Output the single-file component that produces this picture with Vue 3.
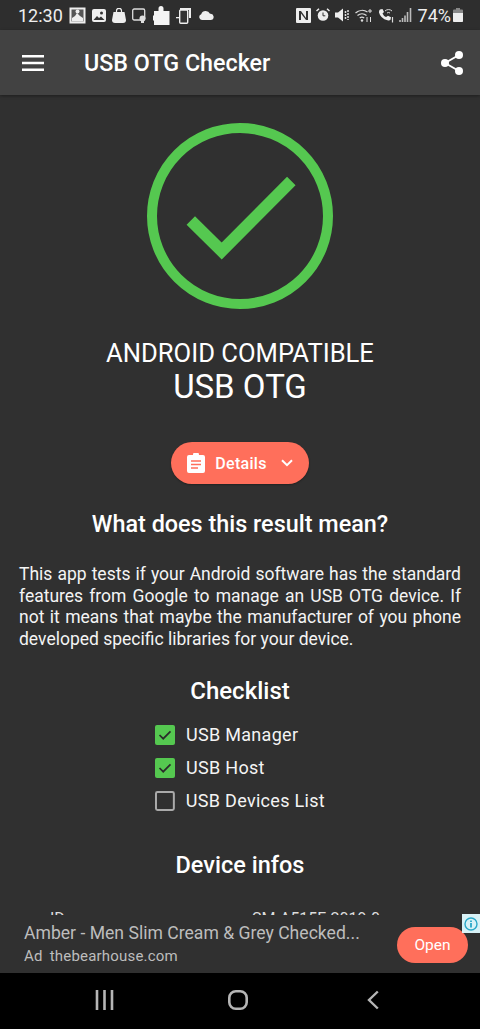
<template>
  <div class="screen">
    <div class="status">
      <span class="time">12:30</span>
      <div class="notif">
        <svg width="17" height="17" viewBox="0 0 17 17"><rect x="0.5" y="0.5" width="16" height="16" fill="#eee"/><rect x="2.5" y="2.5" width="12" height="12" fill="#555"/><path d="M3 14.500V11l3-2 2-3 3 3 3 2v3.500z" fill="#eee"/><circle cx="8.500" cy="4.500" r="2" fill="#eee"/></svg>
        <svg width="14" height="13" viewBox="0 0 14 13"><rect width="14" height="13" rx="2" fill="#eee"/><path d="M1.500 11l3.500-4 2 2 2-1.500 3.500 3.500z" fill="#333"/><circle cx="9.500" cy="4" r="1.500" fill="#333"/></svg>
        <svg width="14" height="15" viewBox="0 0 14 15"><path d="M1.500 4h11L14 12q0 3-3 3H3q-3 0-3-3z" fill="#eee"/><path d="M4.500 5.500V2.800a2.500 2.500 0 0 1 5 0V5.500" fill="none" stroke="#eee" stroke-width="1.200"/></svg>
        <svg width="15" height="15" viewBox="0 0 15 15"><rect x="0.700" y="1" width="12" height="11" rx="1.500" fill="none" stroke="#ddd" stroke-width="1.300"/><circle cx="10.500" cy="10.500" r="3" fill="#ddd"/><rect x="9" y="13" width="3" height="2" fill="#ddd"/></svg>
        <svg width="17" height="20" viewBox="0 0 17 20"><path d="M1 6h4.500V3.500a2.500 2.500 0 0 1 5 0V6H16.500v14H1v-4.500H0v-5h1z" fill="#f4f4f4"/></svg>
        <svg width="16" height="17" viewBox="0 0 16 17"><path d="M4 1h11v10h-2V3H4z" fill="#eee"/><rect x="3.700" y="3" width="8" height="13.300" rx="1" fill="#333" stroke="#eee" stroke-width="1.400"/><rect x="0" y="10" width="3.500" height="1.300" fill="#eee"/></svg>
        <svg width="16" height="10" viewBox="0 0 16 10"><path d="M4 10a3 3 0 0 1-.8-5.800A4.800 4.800 0 0 1 12 3.800 3.100 3.100 0 0 1 13 10z" fill="#eee"/></svg>
      </div>
      <div class="sys">
        <svg width="15" height="15" viewBox="0 0 15 15"><rect width="15" height="15" rx="1" fill="#eee"/><path d="M3 12V3l2 0 5 7V3h2v9h-2L5 5.500V12z" fill="#333"/></svg>
        <svg width="14" height="14" viewBox="0 0 14 14"><circle cx="7" cy="7.500" r="5.300" fill="#eee"/><path d="M7 4.500v3.300h2.300" fill="none" stroke="#333" stroke-width="1"/><path d="M0.500 3L3 .7M13.500 3L11 .7" stroke="#eee" stroke-width="1.500"/></svg>
        <svg width="15" height="14" viewBox="0 0 15 14"><path d="M0 4.500h3L8 .5v13l-5-4H0z" fill="#eee"/><path d="M10.500 3v8M13 2v10" stroke="#ddd" stroke-width="1.500" stroke-dasharray="2 1"/></svg>
        <svg width="18" height="15" viewBox="0 0 18 15"><path d="M0.500 5a10 10 0 0 1 12-1M2.500 7.500a7 7 0 0 1 9 0M4.700 10a4 4 0 0 1 4.500 0" fill="none" stroke="#ddd" stroke-width="1.200"/><circle cx="7" cy="12.500" r="1.200" fill="#ddd"/><path d="M15 1v4M13 3h4M12 9v5M15.500 14V9" stroke="#ddd" stroke-width="1"/></svg>
        <svg width="16" height="15" viewBox="0 0 16 15"><path d="M2 1.500L4.500 1l1.500 3-1.500 1.500q1 2.500 3.500 3.500L10 7.800l3 1.500-.5 2.500q-1 1-3 .5Q2.500 10.500 1 4.500q-.2-2 1-3z" fill="#eee"/><path d="M7 3a5 5 0 0 1 7 0M9 5a2.500 2.500 0 0 1 3 0" fill="none" stroke="#ddd" stroke-width="1"/><path d="M14.500 9v5.500" stroke="#ddd" stroke-width="1.200"/></svg>
        <svg width="13" height="14" viewBox="0 0 13 14"><path d="M1 14v-2M3.500 14V10M6 14V7.500M8.500 14V4M11.500 14V0" stroke="#bbb" stroke-width="1.600"/></svg>
        <span class="pct">74%</span>
        <svg width="10" height="14" viewBox="0 0 10 14"><path d="M3 0h4v1.500h2q1 0 1 1V13q0 1-1 1H1q-1 0-1-1V2.500q0-1 1-1h2z" fill="#888"/><path d="M0 5h10v8q0 1-1 1H1q-1 0-1-1z" fill="#eee"/></svg>
      </div>
    </div>

    <header class="toolbar">
      <svg class="menu" width="22" height="16" viewBox="0 0 22 16"><path d="M0 0h22v2.400H0zM0 6.800h22v2.400H0zM0 13.600h22V16H0z" fill="#fff"/></svg>
      <h1>USB OTG Checker</h1>
      <svg class="share" width="22" height="24" viewBox="0 0 22 24"><path d="M4 12L18 4M4 12l14 8" stroke="#fff" stroke-width="2"/><circle cx="18" cy="4" r="4" fill="#fff"/><circle cx="4" cy="12" r="4" fill="#fff"/><circle cx="18" cy="20" r="4" fill="#fff"/></svg>
    </header>

    <main class="content">
      <svg class="result" width="188" height="188" viewBox="0 0 188 188">
        <circle cx="94" cy="94" r="88" fill="none" stroke="#55c850" stroke-width="10"/>
        <path d="M44.800 98.500L75.700 129L145.300 59" fill="none" stroke="#55c850" stroke-width="12"/>
      </svg>
      <p class="compat">ANDROID COMPATIBLE</p>
      <p class="otg">USB OTG</p>
      <button class="details">
        <svg width="18" height="20" viewBox="0 0 18 20"><path d="M2 2h4a3 3 0 0 1 6 0h4q2 0 2 2v14q0 2-2 2H2q-2 0-2-2V4q0-2 2-2z" fill="#fff"/><path d="M4 8h10M4 11.500h10M4 15h7" stroke="#ff6f5b" stroke-width="1.700"/></svg>
        <span>Details</span>
        <svg width="12" height="8" viewBox="0 0 12 8"><path d="M1 1.200l5 5 5-5" fill="none" stroke="#fff" stroke-width="2"/></svg>
      </button>
      <h2 class="question">What does this result mean?</h2>
      <p class="desc">This app tests if your Android software has the standard features from Google to manage an USB OTG device. If not it means that maybe the manufacturer of you phone developed specific libraries for your device.</p>
      <h2 class="heading">Checklist</h2>
      <ul class="checks">
        <li v-for="c in checks" :key="c.label">
          <svg width="20" height="20" viewBox="0 0 20 20">
            <template v-if="c.on">
              <rect width="20" height="20" rx="2" fill="#55c850"/>
              <path d="M4.500 10l3.700 3.700 7.300-7.400" fill="none" stroke="#2b2b2b" stroke-width="1.700"/>
            </template>
            <rect v-else x="1" y="1" width="18" height="18" rx="1.500" fill="none" stroke="#aaa" stroke-width="2"/>
          </svg>
          <span>{{ c.label }}</span>
        </li>
      </ul>
      <h2 class="heading infos">Device infos</h2>
      <div class="info-row"><span>ID</span><span>SM-A515F-2019-0</span></div>
    </main>

    <aside class="ad">
      <div class="ad-text">
        <div class="ad-title">Amber - Men Slim Cream &amp; Grey Checked...</div>
        <div class="ad-sub"><span>Ad</span><span>thebearhouse.com</span></div>
      </div>
      <button class="open">Open</button>
      <span class="adchoice"><svg width="14" height="14" viewBox="0 0 14 14"><circle cx="7" cy="7" r="6" fill="none" stroke="#2aa8c8" stroke-width="1.400"/><path d="M7 3.500v1.500M7 6v4.500" stroke="#2aa8c8" stroke-width="1.800"/></svg></span>
    </aside>

    <nav class="nav">
      <svg width="19" height="20" viewBox="0 0 19 20"><path d="M2 0v20M9.500 0v20M17 0v20" stroke="#b5b5b5" stroke-width="2.600"/></svg>
      <svg class="home" width="20" height="20" viewBox="0 0 20 20"><rect x="1.300" y="1.300" width="17.400" height="17.400" rx="6.500" fill="none" stroke="#b5b5b5" stroke-width="2.600"/></svg>
      <svg width="12" height="20" viewBox="0 0 12 20"><path d="M10.800 1.500L2 10l8.800 8.500" fill="none" stroke="#b5b5b5" stroke-width="2.400"/></svg>
    </nav>
  </div>
</template>

<script setup>
const checks = [
  { label: 'USB Manager', on: true },
  { label: 'USB Host', on: true },
  { label: 'USB Devices List', on: false },
]
</script>

<style>
html, body { margin: 0; background: #000; }
</style>

<style scoped>
.screen { width: 480px; height: 1029px; display: flex; flex-direction: column; overflow: hidden; background: #303030; font-family: Roboto, "Liberation Sans", sans-serif; color: #fff; }
.status { height: 30px; flex: none; background: #2e2e2e; display: flex; align-items: center; padding: 0 17px 0 18px; box-sizing: border-box; color: #eee; }
.time { font-size: 18px; margin-right: 6px; }
.notif { display: flex; align-items: center; gap: 6px; }
.sys { margin-left: auto; display: flex; align-items: center; gap: 5px; }
.pct { font-size: 18px; margin-left: 1px; margin-right: -3px; }
.toolbar { height: 65px; flex: none; background: #424242; display: flex; align-items: center; padding: 0 17px 0 22px; box-shadow: 0 1px 3px rgba(0,0,0,.4); position: relative; z-index: 1; }
.toolbar h1 { font-size: 23.300px; font-weight: 500; margin: 0 0 0 40px; white-space: nowrap; }
.share { margin-left: auto; }
.content { flex: 1; min-height: 0; overflow: hidden; display: flex; flex-direction: column; align-items: center; padding-top: 27px; box-sizing: border-box; }
.result { flex: none; }
.compat { font-size: 25.600px; line-height: 30px; margin: 28px 0 0; }
.otg { font-size: 33px; line-height: 38px; margin: 0; }
.details { height: 42px; width: 138px; margin-top: 36px; flex: none; border: 0; border-radius: 21px; background: #ff6f5b; color: #fff; font: 500 16px Roboto, sans-serif; display: flex; align-items: center; justify-content: center; gap: 10px; padding: 0; box-shadow: 0 1px 2px rgba(0,0,0,.3); letter-spacing: .3px; }
.details span { margin-right: 4px; }
.question { font-size: 23.400px; font-weight: 500; line-height: 28px; margin: 26px 0 0; }
.desc { font-size: 17.500px; line-height: 21.500px; margin: 26px 19px 0; text-align: justify; color: #f4f4f4; }
.heading { font-size: 24px; font-weight: 500; line-height: 28px; margin: 27px 0 0; }
.checks { list-style: none; padding: 0; margin: 13px 0 0; width: 170px; white-space: nowrap; }
.checks li { display: flex; align-items: center; gap: 11px; height: 33px; font-size: 18px; color: #f4f4f4; letter-spacing: .3px; }
.infos { margin-top: 34px; font-size: 23.500px; }
.info-row { margin: 30px 0 0 50px; width: 330px; align-self: flex-start; display: flex; justify-content: space-between; font-size: 16px; color: #ddd; flex: none; }
.ad { height: 58px; flex: none; background: #303030; display: flex; align-items: center; padding: 0 12px 0 24px; position: relative; }
.ad-text { flex: 1; min-width: 0; color: #bdbdbd; margin-top: -1px; }
.ad-title { font-size: 17.600px; line-height: 24px; white-space: nowrap; }
.ad-sub { font-size: 15px; line-height: 20px; margin-top: 1px; display: flex; gap: 7px; letter-spacing: .2px; }
.open { width: 71px; height: 36px; margin-top: 1px; flex: none; border: 0; border-radius: 18px; background: #ff6f5b; color: #fff; font: 400 15.500px Roboto, sans-serif; padding: 0; }
.adchoice { position: absolute; right: 0; top: -1px; width: 18px; height: 19px; background: #d8f2f7; display: flex; align-items: center; justify-content: center; }
.nav { height: 56px; flex: none; background: #000; display: flex; align-items: center; justify-content: space-between; padding: 0 101px 2px 95px; box-sizing: border-box; }
.home { margin-right: 5px; }
</style>
